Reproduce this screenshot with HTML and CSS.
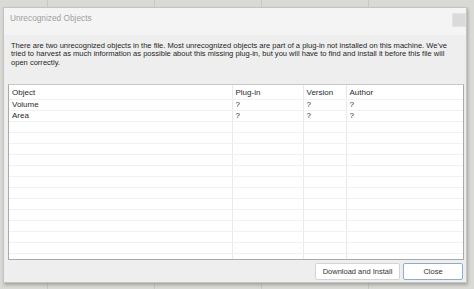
FILE: index.html
```html
<!DOCTYPE html>
<html>
<head lang="en">
    <meta charset="UTF-8">
    <title>Unrecognized Objects</title>
    <link rel="stylesheet" href="styles.css">
</head>
<body>
    <div class="dialog">
        <div class="titlebar">
            <span class="title">Unrecognized Objects</span>
            <span class="closebox"></span>
        </div>
        <p class="message">There are two unrecognized objects in the file. Most unrecognized objects are part of a plug-in not installed on this machine. We've tried to harvest as much information as possible about this missing plug-in, but you will have to find and install it before this file will open correctly.</p>
        <div class="list">
            <table>
                <colgroup>
                    <col class="c-object">
                    <col class="c-plugin">
                    <col class="c-version">
                    <col class="c-author">
                </colgroup>
                <tr><td>Object</td><td>Plug-in</td><td>Version</td><td>Author</td></tr>
                <tr><td>Volume</td><td>?</td><td>?</td><td>?</td></tr>
                <tr><td>Area</td><td>?</td><td>?</td><td>?</td></tr>
                <tr><td></td><td></td><td></td><td></td></tr>
                <tr><td></td><td></td><td></td><td></td></tr>
                <tr><td></td><td></td><td></td><td></td></tr>
                <tr><td></td><td></td><td></td><td></td></tr>
                <tr><td></td><td></td><td></td><td></td></tr>
                <tr><td></td><td></td><td></td><td></td></tr>
                <tr><td></td><td></td><td></td><td></td></tr>
                <tr><td></td><td></td><td></td><td></td></tr>
                <tr><td></td><td></td><td></td><td></td></tr>
                <tr><td></td><td></td><td></td><td></td></tr>
                <tr><td></td><td></td><td></td><td></td></tr>
                <tr><td></td><td></td><td></td><td></td></tr>
                <tr><td></td><td></td><td></td><td></td></tr>
                <tr><td></td><td></td><td></td><td></td></tr>
            </table>
        </div>
        <div class="buttons">
            <button class="btn">Download and Install</button>
            <button class="btn btn-default">Close</button>
        </div>
    </div>
</body>
</html>
```

FILE: styles.css
```css
body,
p,
table {
    margin: 0;
    padding: 0;
}

body {
    width: 474px;
    height: 289px;
    overflow: hidden;
    background-color: #d9d9d5;
    background-image: repeating-linear-gradient(90deg, transparent 0, transparent 47px, #c9c9c4 47px, #c9c9c4 48px, transparent 48px, transparent 107px);
    font-family: "Liberation Sans", Arial, sans-serif;
}

.dialog {
    width: 464px;
    height: 276px;
    margin: 7px 0 0 3px;
    background: #eeeeee;
    border: 1px solid #c4c4c4;
    box-sizing: border-box;
    box-shadow: 1px 2px 3px rgba(0, 0, 0, 0.25);
    display: flex;
    flex-direction: column;
}

.titlebar {
    height: 27px;
    display: flex;
    align-items: flex-start;
    justify-content: space-between;
    background: #f4f4f4;
}

.title {
    margin: 5px 0 0 6px;
    font-size: 8.3px;
    color: #a0a0a0;
}

.closebox {
    width: 14px;
    height: 14px;
    margin-top: 5px;
    background: #dadada;
    border: 1px solid #e2e2e2;
    box-sizing: border-box;
}

.message {
    height: 49px;
    padding: 7px 8px 0 7px;
    box-sizing: border-box;
    font-size: 7.55px;
    line-height: 8.3px;
    color: #1e1e1e;
}

.list {
    width: 456px;
    height: 176px;
    margin-left: 4px;
    background: #fff;
    border: 1px solid #a9a9a9;
    border-top-color: #c8c8c8;
    box-sizing: border-box;
    overflow: hidden;
}

.list table {
    width: 100%;
    border-collapse: collapse;
    table-layout: fixed;
    font-size: 8px;
    color: #2a2a2a;
}

.c-object { width: 223px; }
.c-plugin { width: 71px; }
.c-version { width: 43px; }

.list td {
    height: 10px;
    padding: 0 0 0 3px;
    line-height: 10px;
    border-bottom: 1px solid #f1f1f1;
    border-right: 1px solid #e9e9e9;
    white-space: nowrap;
}

.list tr:first-child td {
    height: 12px;
    padding-top: 2px;
}

.list td:last-child {
    border-right: none;
}

.buttons {
    flex: 1;
    display: flex;
    justify-content: flex-end;
    align-items: flex-start;
    gap: 3px;
    padding: 3px 3px 0 0;
}

.btn {
    height: 17px;
    padding: 0;
    background: #fff;
    border: 1px solid #d4d4d4;
    border-radius: 2px;
    font-family: "Liberation Sans", Arial, sans-serif;
    font-size: 7.5px;
    color: #333;
    width: 85px;
}

.btn-default {
    width: 60px;
    border-color: #8eaccc;
}
```
